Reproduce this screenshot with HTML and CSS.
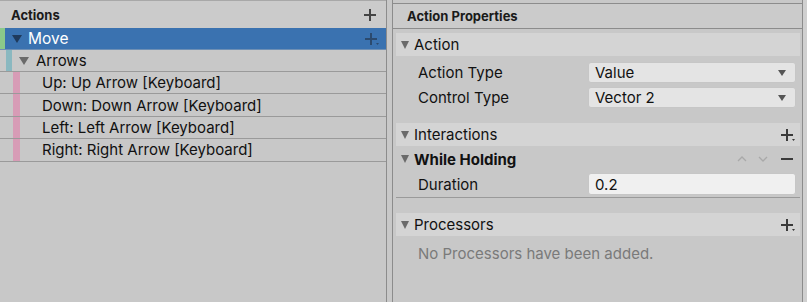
FILE: index.html
```html
<!DOCTYPE html>
<html>
<head>
<meta charset="utf-8">
<link rel="stylesheet" href="styles.css">
</head>
<body>
<div class="window">
  <div class="left">
    <div class="left-head">
      <span class="title">Actions</span>
      <svg class="plus" width="12" height="12" viewBox="0 0 12 12"><path d="M5 0h2v12H5zM0 5h12v2H0z" fill="#444"/></svg>
    </div>
    <div class="row move">
      <span class="strip green"></span>
      <span class="tri dark"></span>
      <span class="move-label">Move</span>
      <svg class="plus-drop" width="14" height="13" viewBox="0 0 14 13"><path d="M5 0h2v12H5zM0 5h12v2H0z" fill="#2b4a6e"/><path d="M11 10h3l-1.5 2z" fill="#2b4a6e"/></svg>
    </div>
    <div class="row arrows">
      <span class="strip teal"></span>
      <span class="tri"></span>
      <span>Arrows</span>
    </div>
    <div class="row bind"><span class="strip pink"></span><span>Up: Up Arrow [Keyboard]</span></div>
    <div class="row bind"><span class="strip pink"></span><span>Down: Down Arrow [Keyboard]</span></div>
    <div class="row bind"><span class="strip pink"></span><span>Left: Left Arrow [Keyboard]</span></div>
    <div class="row bind"><span class="strip pink"></span><span>Right: Right Arrow [Keyboard]</span></div>
  </div>
  <div class="splitter"></div>
  <div class="right">
    <div class="right-head"><span class="title">Action Properties</span></div>
    <div class="right-body">
      <div class="foldout"><span class="tri"></span><span>Action</span></div>
      <div class="fields">
        <div class="field"><span class="label">Action Type</span><div class="dropdown"><span>Value</span><span class="dd-arrow"></span></div></div>
        <div class="field"><span class="label">Control Type</span><div class="dropdown"><span>Vector 2</span><span class="dd-arrow"></span></div></div>
      </div>

      <div class="foldout spaced"><span class="tri"></span><span>Interactions</span>
        <svg class="plus-drop" width="14" height="13" viewBox="0 0 14 13"><path d="M5 0h2v12H5zM0 5h12v2H0z" fill="#3a3a3a"/><path d="M11 10h3l-1.5 2z" fill="#3a3a3a"/></svg>
      </div>
      <div class="sub-head"><span class="tri"></span><span class="bold">While Holding</span>
        <span class="tools">
          <svg width="12" height="8" viewBox="0 0 12 8"><path d="M2 6l4-4 4 4" fill="none" stroke="#a9a9a9" stroke-width="1.3"/></svg>
          <svg width="12" height="8" viewBox="0 0 12 8"><path d="M2 2l4 4 4-4" fill="none" stroke="#a9a9a9" stroke-width="1.3"/></svg>
          <svg class="minus" width="12" height="12" viewBox="0 0 12 12"><path d="M0 5h12v2H0z" fill="#3a3a3a"/></svg>
        </span>
      </div>
      <div class="field tall"><span class="label">Duration</span><div class="input">0.2</div></div>
      <div class="divider"></div>

      <div class="foldout spaced2"><span class="tri"></span><span>Processors</span>
        <svg class="plus-drop" width="14" height="13" viewBox="0 0 14 13"><path d="M5 0h2v12H5zM0 5h12v2H0z" fill="#3a3a3a"/><path d="M11 10h3l-1.5 2z" fill="#3a3a3a"/></svg>
      </div>
      <div class="empty">No Processors have been added.</div>
    </div>
  </div>
  <div class="edge"></div>
</div>
</body>
</html>
```
FILE: styles.css
```css
* { box-sizing: border-box; }
html, body { margin: 0; padding: 0; }
body {
  width: 807px;
  height: 302px;
  overflow: hidden;
  background: #c8c8c8;
  font-family: Inter, "Noto Sans", sans-serif;
  font-size: 15px;
  color: #111;
}
.window {
  display: flex;
  height: 302px;
}
.left {
  width: 387px;
  border-right: 1px solid #8c8c8c;
  background: #c8c8c8;
}
.left-head {
  height: 28px;
  border-top: 1px solid #a8a8a8;
  display: flex;
  align-items: center;
  justify-content: space-between;
  padding: 0 10px 0 11px;
  background: #cbcbcb;
}
.title {
  font-weight: 700;
  font-size: 13px;
  color: #1a1a1a;
}
.row {
  display: flex;
  align-items: center;
}
.strip {
  align-self: stretch;
  width: 6px;
  flex: none;
}
.green { background: #8bc98a; width: 5px; }
.teal { background: #8ab8c0; margin-left: 6px; width: 6px; }
.pink { background: #d79cb6; margin-left: 13px; width: 7px; }
.tri {
  width: 0; height: 0;
  border-left: 5px solid transparent;
  border-right: 5px solid transparent;
  border-top: 8px solid #6a6a6a;
  flex: none;
}
.tri.dark { border-top-color: #1f3a5c; }
.move {
  height: 22px;
  background: #3a72b0;
  color: #fff;
  font-size: 15.5px;
  border-bottom: 1px solid #6e8fb4;
}
.move .tri { margin: 1px 6px 0 7px; }
.move-label { flex: 1; }
.move .plus-drop { margin-right: 7px; margin-top: 2px; }
.arrows {
  height: 22px;
  border-bottom: 1px solid #9a9a9a;
}
.arrows .tri { margin: 0 7px 0 7px; }
.bind {
  height: 22.4px;
  border-bottom: 1px solid #9a9a9a;
}
.bind .strip { margin-right: 22px; }
.splitter {
  width: 5px;
}
.right {
  width: 411px;
  border-left: 1px solid #8c8c8c;
  border-right: 1px solid #8c8c8c;
  display: flex;
  flex-direction: column;
}
.right-head {
  height: 26px;
  border-top: 1px solid #8c8c8c;
  border-bottom: 1px solid #8c8c8c;
  display: flex;
  align-items: center;
  padding: 0 14px;
  background: #cbcbcb;
  margin-top: 3px;
}
.right-body {
  padding: 4px 2px 0 3px;
}
.foldout {
  height: 23px;
  background: #d4d4d4;
  display: flex;
  align-items: center;
  color: #111;
}
.foldout .tri, .sub-head .tri { margin: 0 5px 0 5px; border-left-width: 4.5px; border-right-width: 4.5px; border-top-width: 8px; }
.foldout .plus-drop { margin-left: auto; margin-right: 5px; margin-top: 2px; }
.fields { padding-top: 4px; }
.spaced { margin-top: 13px; }
.spaced2 { margin-top: 15px; }
.field {
  height: 25px;
  display: flex;
  align-items: center;
  padding-left: 22px;
}
.field.tall { height: 26px; }
.label { width: 170px; flex: none; }
.dropdown {
  width: 208px;
  height: 21px;
  background: #e4e4e4;
  border-radius: 3px;
  border: 1px solid #c6c6c6;
  display: flex;
  align-items: center;
  justify-content: space-between;
  padding: 0 9px 0 6px;
}
.dd-arrow {
  width: 0; height: 0;
  border-left: 4.5px solid transparent;
  border-right: 4.5px solid transparent;
  border-top: 6px solid #555;
}
.sub-head {
  height: 24px;
  margin-top: 1px;
  display: flex;
  align-items: center;
}
.bold { font-weight: 700; }
.tools {
  margin-left: auto;
  display: flex;
  align-items: center;
  gap: 9px;
  margin-right: 7px;
}
.tools .minus { margin-left: 3px; }
.input {
  width: 208px;
  height: 22px;
  background: #f0f0f0;
  border-radius: 3px;
  border: 1px solid #c6c6c6;
  padding: 0 6px;
  display: flex;
  align-items: center;
}
.divider {
  height: 1px;
  background: #9a9a9a;
}
.empty {
  padding: 8px 0 0 22px;
  color: #7a7a7a;
}
.edge {
  flex: 1;
  background: #d0d0d0;
}
```
